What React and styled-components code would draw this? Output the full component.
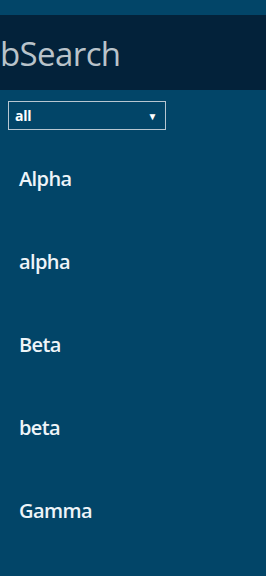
import React from "react";
import styled, { createGlobalStyle } from "styled-components";

const Global = createGlobalStyle`
  html, body { margin: 0; padding: 0; background: #024568; }
  body { font-family: "Open Sans", "Noto Sans", sans-serif; }
`;

const Page = styled.div`
  width: 266px;
  height: 576px;
  overflow: hidden;
  background: #024568;
  padding-top: 15px;
  box-sizing: border-box;
`;

const Header = styled.header`
  height: 75px;
  background: #03223a;
  display: flex;
  align-items: center;
  overflow: hidden;
`;

const Title = styled.h1`
  margin: 2px 0 0 0;
  font-family: "Open Sans", sans-serif;
  font-weight: 400;
  font-size: 33px;
  line-height: 1;
  color: #b9c3ca;
  white-space: nowrap;
  letter-spacing: -0.6px;
`;

const Filter = styled.div`
  margin: 11px 0 0 8px;
  width: 158px;
  height: 29px;
  box-sizing: border-box;
  border: 1px solid #b7c6d1;
  display: flex;
  align-items: center;
  justify-content: space-between;
  padding: 0 8px 0 6px;
  color: #ffffff;
  font-size: 14px;
  font-weight: 700;
  letter-spacing: -0.3px;
`;

const Arrow = styled.span`
  font-size: 10px;
  color: #ffffff;
`;

const List = styled.ul`
  list-style: none;
  margin: 7px 0 0;
  padding: 0;
  display: flex;
  flex-direction: column;
`;

const Item = styled.li`
  height: 83px;
  display: flex;
  align-items: center;
  padding-left: 19px;
  font-size: 20px;
  font-weight: 600;
  color: #eef4f8;
  letter-spacing: -0.6px;
`;

const items = ["Alpha", "alpha", "Beta", "beta", "Gamma"];

export default function App() {
  return (
    <Page>
      <Global />
      <Header>
        <Title>bSearch</Title>
      </Header>
      <Filter>
        <span>all</span>
        <Arrow>▼</Arrow>
      </Filter>
      <List>
        {items.map((t) => (
          <Item key={t}>{t}</Item>
        ))}
      </List>
    </Page>
  );
}
